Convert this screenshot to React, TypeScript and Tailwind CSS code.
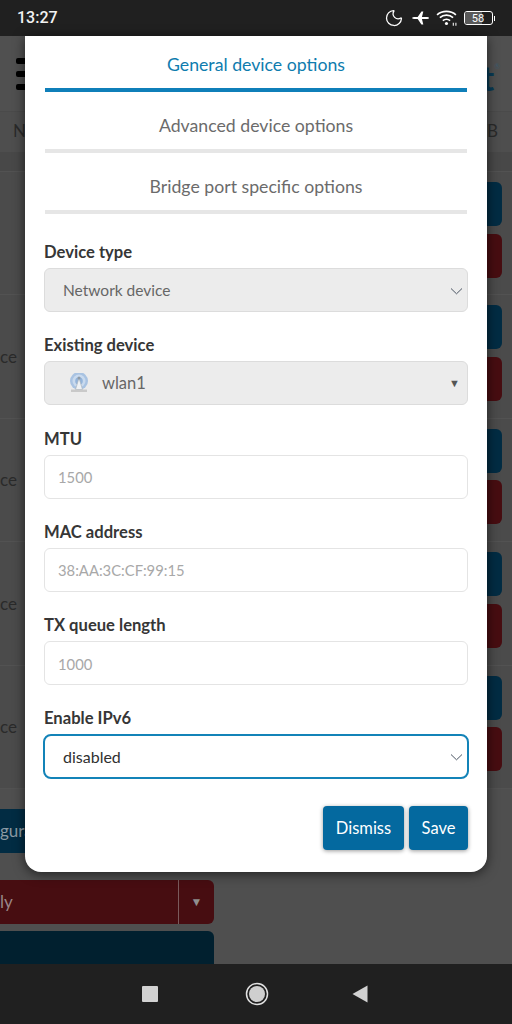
import React from "react";
import { Moon } from "lucide-react";

const Chevron = () => (
  <svg width="13" height="8" viewBox="0 0 13 8" fill="none" stroke="#4b5563" strokeWidth="1">
    <path d="M1 1.500 6.500 6.800 12 1.500" />
  </svg>
);

const Field = ({ label, children }: { label: string; children: React.ReactNode }) => (
  <div className="flex flex-col">
    <label className="text-[16.6px] leading-6 h-6 font-bold text-[#363636] mb-1">{label}</label>
    {children}
  </div>
);

const TextInput = ({ value }: { value: string }) => (
  <div className="h-[44px] flex items-center pl-[13px] pt-[1px] rounded-md border border-[#e4e4e4] bg-white text-[14.8px] text-[#a8a8a8]">
    {value}
  </div>
);

const WlanIcon = () => (
  <svg width="22" height="20" viewBox="0 0 22 20" fill="none">
    <circle cx="11" cy="8" r="9" fill="#a9c3e2" />
    <circle cx="11" cy="8" r="6.500" fill="#c9daee" />
    <circle cx="11" cy="8" r="3.800" fill="#94b4da" />
    <path d="M11 5 7.500 16.500H14.500Z" fill="#eef1f4" stroke="#aab4bd" strokeWidth="0.700" />
    <circle cx="11" cy="5" r="1.500" fill="#8d99a5" />
    <rect x="3" y="16.500" width="16" height="2.500" fill="#c9c9c9" />
  </svg>
);

const TabItem = ({ label, active, first }: { label: string; active?: boolean; first?: boolean }) => (
  <div
    className={`flex items-center justify-center text-[17.7px] border-b-4 ${first ? "h-[56px] pt-[6px]" : "h-[61px] pt-[11px]"} ${
      active ? "text-[#0f7cae] border-[#0f7fb9]" : "text-[#6b6b6b] border-[#e6e6e6]"
    }`}
  >
    {label}
  </div>
);

const RowButtons = () => (
  <div className="flex flex-col gap-[7.5px] w-[100px] self-start mt-[10px]">
    <div className="h-[44px] rounded-md bg-[#022c43]" />
    <div className="h-[44px] rounded-md bg-[#470d11]" />
  </div>
);

const DeviceRow = ({ label }: { label: string }) => (
  <div className="h-[123.5px] flex items-center justify-between pr-[10px] border-b border-[#525252] text-[17px] text-[#2a2a2a]">
    <span>{label}</span>
    <RowButtons />
  </div>
);

const StatusBar = () => (
  <div className="h-[36px] shrink-0 bg-[#202020] flex items-center justify-between pl-[17px] pr-[17px] text-white">
    <span className="text-[16px] font-medium font-['Roboto',sans-serif] text-[#f2f2f2]">13:27</span>
    <div className="flex items-center">
      <Moon size={20} strokeWidth={1.5} className="text-white" />
      <svg width="17" height="16" viewBox="0 0 18 16" fill="#fff" className="ml-[8px] -scale-x-100">
        <path d="M0 8 Q0 7 2 7 H7.500 L6 1 H8 L12 7 H16 Q18 7.500 18 8 Q18 8.500 16 9 H12 L8 15 H6 L7.500 9 H2 Q0 9 0 8Z" />
      </svg>
      <svg width="22" height="18" viewBox="0 0 21 17" fill="none" stroke="#fff" strokeWidth="1.600" className="ml-[7px]">
        <path d="M1 5.500C6 1 14 1 19 5.500M3.700 8.200C7.200 5 12.800 5 16.300 8.200M6.500 11C8.500 9.300 11.500 9.300 13.500 11" />
        <circle cx="10" cy="13.800" r="1.500" fill="#fff" stroke="none" />
        <path d="M16.500 13v3M19 13v3" strokeWidth="1" />
      </svg>
      <div className="ml-[6px] flex items-center">
        <div className="relative w-[29px] h-[14px] rounded-[3px] border border-white overflow-hidden flex items-center justify-center">
          <div className="absolute left-0 top-0 bottom-0 w-[17px] bg-[#5a5a5a]" />
          <span className="relative text-[11px] leading-none font-['Roboto',sans-serif] text-white">58</span>
        </div>
        <div className="ml-[1px] w-[1.500px] h-[5px] bg-white" />
      </div>
    </div>
  </div>
);

const NavBar = () => (
  <div className="h-[60px] shrink-0 bg-[#202020] flex items-center justify-center pr-[2px]">
    <div className="w-4 h-4 rounded-[1px] bg-[#d2d2d2]" />
    <svg width="24" height="24" viewBox="0 0 24 24" className="ml-[87px]">
      <circle cx="12" cy="12" r="10.500" fill="none" stroke="#e2e2e2" strokeWidth="1.500" />
      <circle cx="12" cy="12" r="8" fill="#cfcfcf" />
    </svg>
    <svg width="16" height="18" viewBox="0 0 16 18" className="ml-[83px]">
      <path d="M15.500 0.500V17.500L0.500 9Z" fill="#d2d2d2" />
    </svg>
  </div>
);

export default function App() {
  return (
    <div className="relative w-[512px] h-[1024px] overflow-hidden flex flex-col bg-[#4f4f4f] font-['Lato',sans-serif]">
      <StatusBar />

      {/* page behind the dialog */}
      <div className="flex-1 flex flex-col overflow-hidden">
        <div className="h-[76px] shrink-0 flex items-center justify-between pl-4 pr-[12px] border-b border-[#4a4a4a] bg-[#505050]">
          <div className="flex flex-col gap-[7px] w-[30px]">
            <div className="h-[6px] rounded-[2px] bg-black" />
            <div className="h-[6px] rounded-[2px] bg-black" />
            <div className="h-[6px] rounded-[2px] bg-black" />
          </div>
          <div className="flex items-start pt-[8px]">
            <span className="text-[34px] leading-none font-bold text-[#083a55]">t</span>
            <span className="text-[7px] leading-none text-[#3d5a6b] mt-[2px]">®</span>
          </div>
        </div>
        <div className="h-[40px] shrink-0 flex items-center justify-between pl-[13px] pr-[14px] pb-[2px] bg-[#4e4e4e] text-[17px] text-[#2a2a2a]">
          <span>N</span>
          <span>TB</span>
        </div>
        <div className="h-[19px] shrink-0 bg-[#484848]" />
        <div className="border-t border-[#525252] bg-[#4b4b4b]">
          <div className="h-[123px] flex items-center justify-end pr-[10px] border-b border-[#525252]">
            <RowButtons />
          </div>
          <DeviceRow label="ce" />
          <DeviceRow label="ce" />
          <DeviceRow label="ce" />
          <DeviceRow label="ce" />
        </div>
        <div className="flex flex-col w-[214px] mt-[20px]">
          <div className="h-[44px] w-[100px] rounded-r-md bg-[#022c43] flex items-center text-[17px] text-[#8b9aa3]">
            gura
          </div>
          <div className="mt-[27px] h-[44px] flex rounded-r-md bg-[#470d11] text-[17px] text-[#9a8587]">
            <div className="flex-1 flex items-center border-r border-[#7a5a5c]">ly</div>
            <div className="w-[35px] flex items-center justify-center text-[12px] text-[#8f8f8f]">▼</div>
          </div>
          <div className="mt-[7px] h-[33px] rounded-tr-md bg-[#01202f]" />
        </div>
      </div>

      <NavBar />

      {/* dialog */}
      <div className="absolute left-[25px] top-[36px] w-[462px] h-[836px] rounded-b-[16px] bg-white px-[19px] shadow-[0_2px_12px_rgba(0,0,0,0.6)]">
        <div className="mx-[1px]">
          <TabItem label="General device options" active first />
          <TabItem label="Advanced device options" />
          <TabItem label="Bridge port specific options" />
        </div>

        <div className="mt-[26px] flex flex-col gap-[21.3px]">
          <Field label="Device type">
            <div className="h-[44px] flex items-center justify-between pl-[18px] pr-[4px] pt-[1px] rounded-md border border-[#dcdcdc] bg-[#ececec] text-[15.5px] text-[#666]">
              Network device
              <Chevron />
            </div>
          </Field>
          <Field label="Existing device">
            <div className="h-[44px] flex items-center pl-[23px] pr-[7px] rounded-md border border-[#dcdcdc] bg-[#ececec] text-[16.5px] text-[#666]">
              <WlanIcon />
              <span className="ml-[12px] flex-1 pt-[1px]">wlan1</span>
              <span className="text-[11px] text-[#555]">▼</span>
            </div>
          </Field>
          <Field label="MTU">
            <TextInput value="1500" />
          </Field>
          <Field label="MAC address">
            <TextInput value="38:AA:3C:CF:99:15" />
          </Field>
          <Field label="TX queue length">
            <TextInput value="1000" />
          </Field>
          <Field label="Enable IPv6">
            <div className="-mx-[1px] h-[45px] flex items-center justify-between pl-[18px] pr-[4px] rounded-lg border-2 border-[#1383b8] bg-white text-[16px] text-[#303030]">
              disabled
              <Chevron />
            </div>
          </Field>
        </div>

        <div className="mt-[26.5px] flex justify-end gap-[5px]">
          <button className="h-[44px] w-[81px] pt-[1px] rounded bg-[#04699f] text-[16.5px] text-white shadow-[0_1px_4px_rgba(0,0,0,0.4)]">
            Dismiss
          </button>
          <button className="h-[44px] w-[59px] pt-[1px] rounded bg-[#04699f] text-[16.5px] text-white shadow-[0_1px_4px_rgba(0,0,0,0.4)]">
            Save
          </button>
        </div>
      </div>
    </div>
  );
}
